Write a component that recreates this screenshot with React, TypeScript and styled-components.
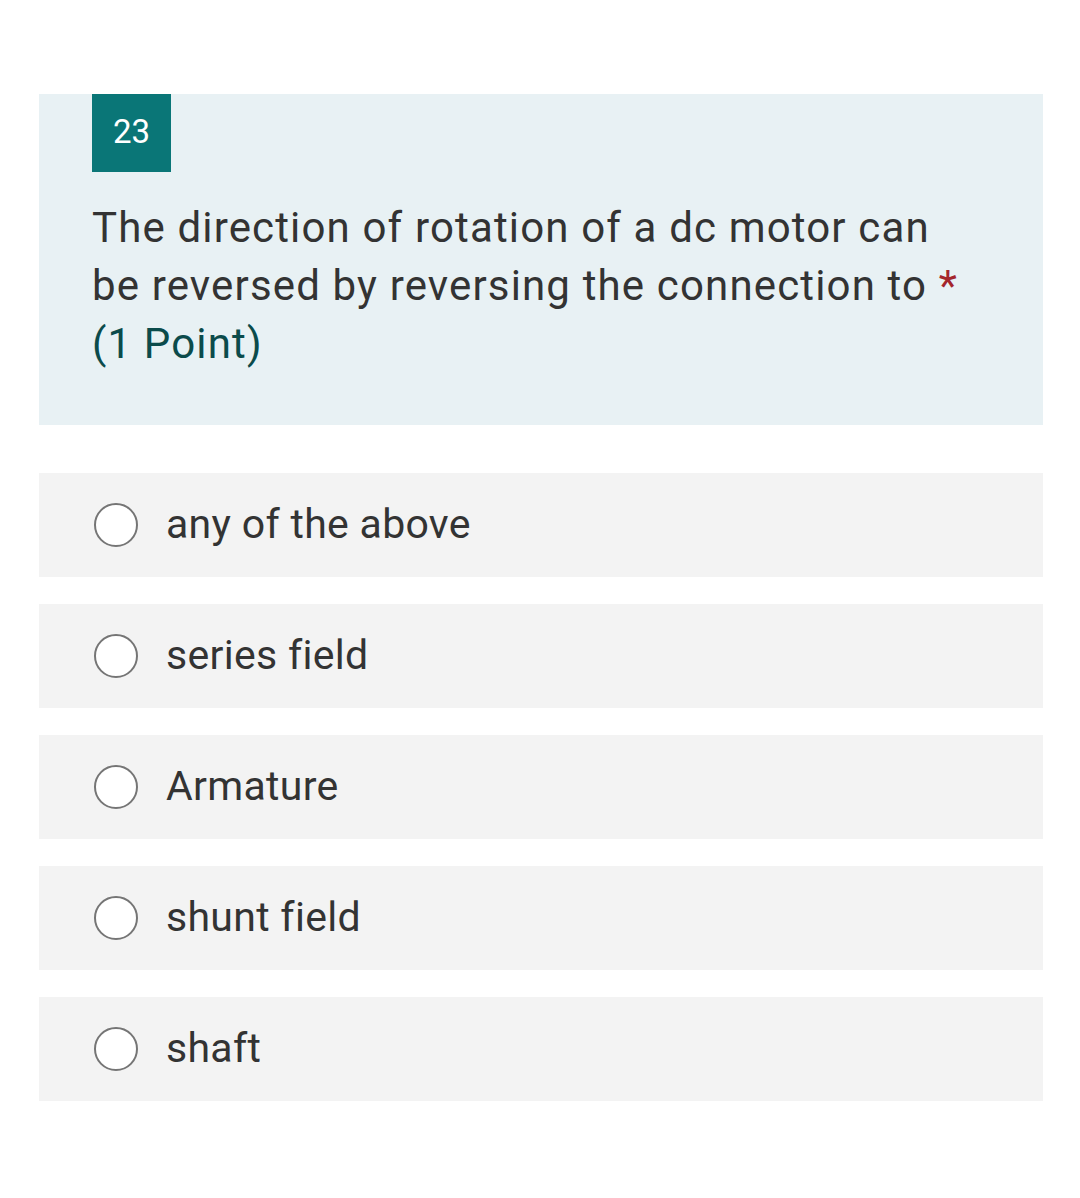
import styled, { createGlobalStyle } from 'styled-components'

const options = ['any of the above', 'series field', 'Armature', 'shunt field', 'shaft']

const GlobalStyle = createGlobalStyle`
    body {
        margin: 0;
        background: #ffffff;
        font-family: Roboto, "Noto Sans", sans-serif;
    }
`

export default function App() {
    return (
        <>
            <GlobalStyle />
            <StyledPage>
                <StyledQuestion>
                    <span className='number'>23</span>
                    <p className='title'>
                        The direction of rotation of a dc motor can be reversed by reversing the connection to <span className='required'>*</span>
                        <br />
                        <span className='points'>(1 Point)</span>
                    </p>
                </StyledQuestion>
                <StyledOptions>
                    {options.map(option => (
                        <StyledOption key={option}>
                            <input type='radio' name='q23' />
                            <span>{option}</span>
                        </StyledOption>
                    ))}
                </StyledOptions>
            </StyledPage>
        </>
    )
}

const StyledPage = styled.div`
    padding: 94px 37px 96px 39px;
`

const StyledQuestion = styled.div`
    background-color: #e8f1f4;
    padding: 0 76px 52px 53px;

    .number {
        display: flex;
        align-items: center;
        justify-content: center;
        width: 79px;
        height: 78px;
        background-color: #0a7677;
        color: #ffffff;
        font-size: 33px;
        padding-bottom: 3px;
        box-sizing: border-box;
    }

    .title {
        margin: 27px 0 0;
        font-size: 42px;
        line-height: 58px;
        letter-spacing: 1.15px;
        color: #333333;
    }

    .required {
        color: #a4262c;
    }

    .points {
        color: #0b4b4b;
    }
`

const StyledOptions = styled.div`
    display: flex;
    flex-direction: column;
    gap: 27px;
    margin-top: 48px;
`

const StyledOption = styled.label`
    display: flex;
    align-items: center;
    gap: 28px;
    height: 104px;
    padding-left: 55px;
    background-color: #f3f3f3;
    font-size: 41px;
    letter-spacing: 0.3px;
    color: #333333;

    span {
        padding-bottom: 3px;
    }

    input {
        appearance: none;
        margin: 0;
        width: 44px;
        height: 44px;
        border: 2px solid #757575;
        border-radius: 50%;
        background: #ffffff;
        box-sizing: border-box;
    }
`
